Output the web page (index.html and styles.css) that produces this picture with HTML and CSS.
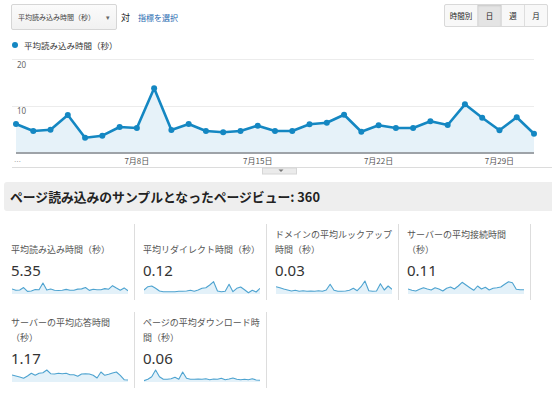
FILE: index.html
```html
<!DOCTYPE html>
<html lang="ja">
<head>
<meta charset="utf-8">
<link rel="stylesheet" href="styles.css">
</head>
<body>
<div class="toolbar">
  <div class="left">
    <div class="select"><span>平均読み込み時間（秒）</span><span class="caret">▾</span></div>
    <span class="vs">対</span>
    <span class="link">指標を選択</span>
  </div>
  <div class="btn-group">
    <span class="btn w1">時間別</span>
    <span class="btn w2 active">日</span>
    <span class="btn w3">週</span>
    <span class="btn w4">月</span>
  </div>
</div>
<div class="legend"><span class="dot"></span><span>平均読み込み時間（秒）</span></div>
<svg class="chart" width="552" height="120" viewBox="0 55 552 120">
  <line x1="12" y1="59.5" x2="534" y2="59.5" stroke="#ececec"/>
  <line x1="12" y1="106.5" x2="534" y2="106.5" stroke="#ececec"/>
  <text x="17" y="68" class="ax">20</text>
  <text x="17" y="114" class="ax">10</text>
  <polygon fill="#e6f2f9" points="16,153 16,124 33.27,131 50.53,129.7 67.8,115 85.07,137.7 102.33,135.7 119.6,127 136.87,128 154.13,88.3 171.4,130 188.67,124 205.93,131 223.2,132.3 240.47,131 257.73,125.7 275,131 292.27,131 309.53,124.3 326.8,122.7 344.07,114.7 361.33,131.7 378.6,125.3 395.87,128 413.13,128 430.4,121.3 447.67,125 464.93,104.3 482.2,117.7 499.47,130.3 516.73,117.3 534,133.7 534,153"/>
  <line x1="16" y1="153" x2="534" y2="153" stroke="#9ea3a8" stroke-width="2"/>
  <polyline fill="none" stroke="#1487c2" stroke-width="2.6" stroke-linejoin="round" points="16,124 33.27,131 50.53,129.7 67.8,115 85.07,137.7 102.33,135.7 119.6,127 136.87,128 154.13,88.3 171.4,130 188.67,124 205.93,131 223.2,132.3 240.47,131 257.73,125.7 275,131 292.27,131 309.53,124.3 326.8,122.7 344.07,114.7 361.33,131.7 378.6,125.3 395.87,128 413.13,128 430.4,121.3 447.67,125 464.93,104.3 482.2,117.7 499.47,130.3 516.73,117.3 534,133.7"/>
  <g fill="#1487c2">
    <circle cx="16" cy="124" r="3"/><circle cx="33.27" cy="131" r="3"/><circle cx="50.53" cy="129.7" r="3"/><circle cx="67.8" cy="115" r="3"/><circle cx="85.07" cy="137.7" r="3"/><circle cx="102.33" cy="135.7" r="3"/><circle cx="119.6" cy="127" r="3"/><circle cx="136.87" cy="128" r="3"/><circle cx="154.13" cy="88.3" r="3"/><circle cx="171.4" cy="130" r="3"/><circle cx="188.67" cy="124" r="3"/><circle cx="205.93" cy="131" r="3"/><circle cx="223.2" cy="132.3" r="3"/><circle cx="240.47" cy="131" r="3"/><circle cx="257.73" cy="125.7" r="3"/><circle cx="275" cy="131" r="3"/><circle cx="292.27" cy="131" r="3"/><circle cx="309.53" cy="124.3" r="3"/><circle cx="326.8" cy="122.7" r="3"/><circle cx="344.07" cy="114.7" r="3"/><circle cx="361.33" cy="131.7" r="3"/><circle cx="378.6" cy="125.3" r="3"/><circle cx="395.87" cy="128" r="3"/><circle cx="413.13" cy="128" r="3"/><circle cx="430.4" cy="121.3" r="3"/><circle cx="447.67" cy="125" r="3"/><circle cx="464.93" cy="104.3" r="3"/><circle cx="482.2" cy="117.7" r="3"/><circle cx="499.47" cy="130.3" r="3"/><circle cx="516.73" cy="117.3" r="3"/><circle cx="534" cy="133.7" r="3"/>
  </g>
  <text x="14" y="164" class="dots">…</text>
  <text x="136.87" y="164" class="xl">7月8日</text>
  <text x="257.73" y="164" class="xl">7月15日</text>
  <text x="378.6" y="164" class="xl">7月22日</text>
  <text x="499.47" y="164" class="xl">7月29日</text>
  <line x1="12" y1="167.5" x2="552" y2="167.5" stroke="#dcdcdc"/>
  <rect x="262.5" y="168" width="34" height="6" fill="#ebebeb" stroke="#d6d6d6"/>
  <path d="M278.5 169.6 L283.5 169.6 L281 172 Z" fill="#777"/>
</svg>
<div class="summary">ページ読み込みのサンプルとなったページビュー: 360</div>
<div class="cards">
  <div class="card">
    <div class="card-title"><span>平均読み込み時間（秒）</span></div>
    <div class="card-value">5.35</div>
    <svg class="spark" viewBox="0 0 30 14" preserveAspectRatio="none">
      <polygon class="sa" points="0,14 0,9.04 1,10.24 2,10 3,7.52 4,11.36 5,11.04 6,9.6 7,9.76 8,2.96 9,10.08 10,9.04 11,10.24 12,10.48 13,10.24 14,9.36 15,10.24 16,10.24 17,9.12 18,8.88 19,7.52 20,10.4 21,9.28 22,9.76 23,9.76 24,8.64 25,9.2 26,5.68 27,8 28,10.16 29,7.92 30,10.72 30,14"/>
      <polyline class="sl" points="0,9.04 1,10.24 2,10 3,7.52 4,11.36 5,11.04 6,9.6 7,9.76 8,2.96 9,10.08 10,9.04 11,10.24 12,10.48 13,10.24 14,9.36 15,10.24 16,10.24 17,9.12 18,8.88 19,7.52 20,10.4 21,9.28 22,9.76 23,9.76 24,8.64 25,9.2 26,5.68 27,8 28,10.16 29,7.92 30,10.72"/>
    </svg>
  </div>
  <div class="card">
    <div class="card-title"><span>平均リダイレクト時間（秒）</span></div>
    <div class="card-value">0.12</div>
    <svg class="spark" viewBox="0 0 30 14" preserveAspectRatio="none">
      <polygon class="sa" points="0,14 0,10 1,6.7 2,6 3,8.3 4,11 5,11.7 6,11.7 7,11.7 8,11.7 9,11.3 10,11.3 11,11 12,10.3 13,11.3 14,10 15,8.3 16,7.7 17,5 18,1.7 19,11 20,11.7 21,11.3 22,4.3 23,11.7 24,8.3 25,7 26,9.7 27,12.7 28,10.3 29,12 30,8.3 30,14"/>
      <polyline class="sl" points="0,10 1,6.7 2,6 3,8.3 4,11 5,11.7 6,11.7 7,11.7 8,11.7 9,11.3 10,11.3 11,11 12,10.3 13,11.3 14,10 15,8.3 16,7.7 17,5 18,1.7 19,11 20,11.7 21,11.3 22,4.3 23,11.7 24,8.3 25,7 26,9.7 27,12.7 28,10.3 29,12 30,8.3"/>
    </svg>
  </div>
  <div class="card">
    <div class="card-title"><span>ドメインの平均ルックアップ時間（秒）</span></div>
    <div class="card-value">0.03</div>
    <svg class="spark" viewBox="0 0 30 14" preserveAspectRatio="none">
      <polygon class="sa" points="0,14 0,6.7 1,7.7 2,9 3,10 4,11 5,10.3 6,11.3 7,10.7 8,11.3 9,11 10,11.3 11,10.7 12,11.3 13,10 14,4.3 15,10.3 16,11.3 17,11.3 18,11 19,10.3 20,8.3 21,10.7 22,6.7 23,1 24,10.7 25,11.3 26,11 27,3.7 28,10 29,6 30,9.3 30,14"/>
      <polyline class="sl" points="0,6.7 1,7.7 2,9 3,10 4,11 5,10.3 6,11.3 7,10.7 8,11.3 9,11 10,11.3 11,10.7 12,11.3 13,10 14,4.3 15,10.3 16,11.3 17,11.3 18,11 19,10.3 20,8.3 21,10.7 22,6.7 23,1 24,10.7 25,11.3 26,11 27,3.7 28,10 29,6 30,9.3"/>
    </svg>
  </div>
  <div class="card">
    <div class="card-title"><span>サーバーの平均接続時間（秒）</span></div>
    <div class="card-value">0.11</div>
    <svg class="spark" viewBox="0 0 30 14" preserveAspectRatio="none">
      <polygon class="sa" points="0,14 0,9 1,10.3 2,11 3,9.3 4,7.7 5,9 6,10 7,7.7 8,9 9,11 10,8.3 11,7 12,9 13,6 14,2.3 15,5 16,7.7 17,10.3 18,6 19,9 20,7.3 21,10 22,8.3 23,7.7 24,7 25,4.3 26,1.7 27,2.7 28,9.3 29,9.7 30,9.7 30,14"/>
      <polyline class="sl" points="0,9 1,10.3 2,11 3,9.3 4,7.7 5,9 6,10 7,7.7 8,9 9,11 10,8.3 11,7 12,9 13,6 14,2.3 15,5 16,7.7 17,10.3 18,6 19,9 20,7.3 21,10 22,8.3 23,7.7 24,7 25,4.3 26,1.7 27,2.7 28,9.3 29,9.7 30,9.7"/>
    </svg>
  </div>
  <div class="card">
    <div class="card-title"><span>サーバーの平均応答時間（秒）</span></div>
    <div class="card-value">1.17</div>
    <svg class="spark" viewBox="0 0 30 14" preserveAspectRatio="none">
      <polygon class="sa" points="0,14 0,7 1,8 2,9 3,10.3 4,8 5,5.3 6,7.3 7,5.3 8,4.7 9,2 10,5.7 11,6 12,5.3 13,5.7 14,5.3 15,6.7 16,6.7 17,8.3 18,6 19,5.7 20,6 21,7.3 22,10 23,4 24,7.3 25,6.3 26,5 27,4 28,7.3 29,11.7 30,12 30,14"/>
      <polyline class="sl" points="0,7 1,8 2,9 3,10.3 4,8 5,5.3 6,7.3 7,5.3 8,4.7 9,2 10,5.7 11,6 12,5.3 13,5.7 14,5.3 15,6.7 16,6.7 17,8.3 18,6 19,5.7 20,6 21,7.3 22,10 23,4 24,7.3 25,6.3 26,5 27,4 28,7.3 29,11.7 30,12"/>
    </svg>
  </div>
  <div class="card">
    <div class="card-title"><span>ページの平均ダウンロード時間（秒）</span></div>
    <div class="card-value">0.06</div>
    <svg class="spark" viewBox="0 0 30 14" preserveAspectRatio="none">
      <polygon class="sa" points="0,14 0,12.7 1,11.3 2,8.7 3,2 4,8.7 5,11.3 6,11.3 7,10.7 8,9.3 9,11.3 10,4 11,10.3 12,11.3 13,11.3 14,11 15,11.3 16,10.7 17,11.7 18,11 19,11.3 20,10.3 21,11.7 22,11 23,10 24,11.3 25,11.7 26,11.3 27,11.7 28,10.7 29,12 30,12.3 30,14"/>
      <polyline class="sl" points="0,12.7 1,11.3 2,8.7 3,2 4,8.7 5,11.3 6,11.3 7,10.7 8,9.3 9,11.3 10,4 11,10.3 12,11.3 13,11.3 14,11 15,11.3 16,10.7 17,11.7 18,11 19,11.3 20,10.3 21,11.7 22,11 23,10 24,11.3 25,11.7 26,11.3 27,11.7 28,10.7 29,12 30,12.3"/>
    </svg>
  </div>
</div>
</body>
</html>
```

FILE: styles.css
```css
html, body {
  margin: 0;
  padding: 0;
}
body {
  font-family: "Noto Sans CJK JP", "Noto Sans", sans-serif;
  background: #fff;
  color: #333;
  width: 552px;
  height: 400px;
  overflow: hidden;
}
.toolbar {
  display: flex;
  justify-content: space-between;
  align-items: flex-start;
  padding: 4px 4px 0 11px;
  height: 30px;
}
.left {
  display: flex;
  align-items: center;
  height: 26px;
}
.select {
  width: 106px;
  height: 26px;
  box-sizing: border-box;
  border: 1px solid #d6d6d6;
  border-radius: 2px;
  background: linear-gradient(#fbfbfb, #f1f1f1);
  display: flex;
  align-items: center;
  justify-content: space-between;
  padding: 0 6px;
  font-size: 7px;
  color: #444;
}
.caret {
  font-size: 7px;
  color: #666;
}
.vs {
  margin-left: 4px;
  font-size: 9px;
  color: #222;
}
.link {
  margin-left: 8px;
  font-size: 8px;
  color: #2468b0;
}
.btn-group {
  display: flex;
  height: 23px;
  box-sizing: border-box;
  border: 1px solid #d9d9d9;
  border-radius: 2px;
  background: #f8f8f8;
}
.btn {
  display: flex;
  align-items: center;
  justify-content: center;
  font-size: 7.5px;
  color: #222;
  border-left: 1px solid #dedede;
}
.btn.w1 { width: 32px; border-left: none; }
.btn.w2 { width: 23px; }
.btn.w3 { width: 22px; }
.btn.w4 { width: 22px; }
.btn.active {
  background: #e4e4e4;
  box-shadow: inset 0 1px 2px rgba(0,0,0,0.12);
}
.legend {
  display: flex;
  align-items: center;
  height: 21px;
  padding-left: 12px;
  font-size: 8.5px;
  color: #333;
}
.dot {
  width: 6px;
  height: 6px;
  border-radius: 50%;
  background: #1487c2;
  margin-right: 6px;
}
.chart {
  display: block;
}
.ax {
  font-size: 8px;
  fill: #666;
  font-family: "Noto Sans", sans-serif;
}
.xl {
  font-size: 8px;
  fill: #555;
  text-anchor: middle;
  font-family: "Noto Sans CJK JP", sans-serif;
}
.dots {
  font-size: 7px;
  fill: #999;
}
.summary {
  margin: 7px 0 0 4px;
  height: 29px;
  background: #eeeeee;
  border-radius: 3px 0 0 3px;
  display: flex;
  align-items: center;
  padding-left: 6px;
  font-size: 12.8px;
  font-weight: bold;
  color: #222;
}
.cards {
  display: grid;
  grid-template-columns: repeat(4, 132px);
  row-gap: 12px;
  margin: 13px 0 0 3px;
}
.card {
  border-right: 1px solid #dddddd;
  padding: 3px 5px 6px 8px;
  display: flex;
  flex-direction: column;
}
.card-title {
  min-height: 30px;
  line-height: 15px;
  font-size: 9px;
  color: #555;
  display: flex;
  align-items: flex-end;
}
.card-value {
  font-family: "Noto Sans", sans-serif;
  font-size: 15px;
  line-height: 20px;
  margin-top: 3px;
  color: #333;
}
.spark {
  display: block;
  width: 116px;
  height: 14px;
  margin-left: 1px;
}
.sa {
  fill: #e3f1f9;
}
.sl {
  fill: none;
  stroke: #4ea3d0;
  stroke-width: 1.1;
  vector-effect: non-scaling-stroke;
  stroke-linejoin: round;
}
```
